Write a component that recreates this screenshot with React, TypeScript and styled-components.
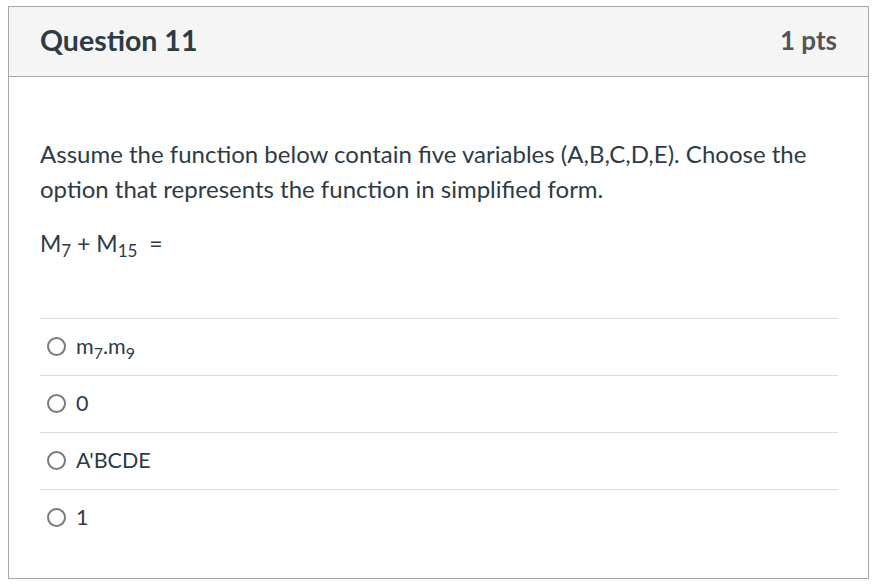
import React from 'react'
import styled, { createGlobalStyle } from 'styled-components'

const GlobalStyle = createGlobalStyle`
  html, body {
    margin: 0;
    padding: 0;
    background: #fff;
  }
  body {
    font-family: Lato, 'Liberation Sans', sans-serif;
    color: #2d3b45;
  }
`

const Page = styled.div`
  padding: 6px 11px 0 8px;
`

const Card = styled.div`
  border: 1px solid #a8a8a8;
  height: 571px;
  background: #fff;
`

const Header = styled.div`
  display: flex;
  justify-content: space-between;
  align-items: center;
  box-sizing: border-box;
  height: 70px;
  padding: 0 31px 4px;
  background: #f5f5f5;
  border-bottom: 1px solid #a8a8a8;
`

const Title = styled.h2`
  margin: 0;
  font-size: 28.5px;
  font-weight: 700;
  color: #2d3b45;
`

const Points = styled.span`
  font-size: 26px;
  font-weight: 700;
  color: #555;
`

const Body = styled.div`
  padding: 59px 30px 0 31px;
`

const Text = styled.p<{ $size?: number }>`
  margin: 0 0 20px;
  font-size: ${({ $size }) => $size ?? 24}px;
  line-height: 35px;
`

const Sub = styled.sub<{ $size?: number }>`
  font-size: ${({ $size }) => $size ?? 17}px;
  vertical-align: -5px;
  line-height: 0;
`

const Answers = styled.ul`
  list-style: none;
  margin: 57px 0 0;
  padding: 0;
`

const Answer = styled.li`
  display: flex;
  align-items: center;
  gap: 10px;
  box-sizing: border-box;
  height: 57px;
  padding-bottom: 2px;
  border-top: 1px solid #dcdcdc;
  font-size: 21.5px;
`

const Radio = styled.span`
  box-sizing: border-box;
  flex: none;
  width: 19px;
  height: 19px;
  margin-left: 7px;
  border: 2px solid #7a7a7a;
  border-radius: 50%;
`

const options: React.ReactNode[] = [
  <>
    m<Sub $size={16}>7</Sub>.m<Sub $size={16}>9</Sub>
  </>,
  '0',
  "A'BCDE",
  '1',
]

export default function App() {
  return (
    <>
      <GlobalStyle />
      <Page>
        <Card>
          <Header>
            <Title>Question 11</Title>
            <Points>1 pts</Points>
          </Header>
          <Body>
            <Text>
              Assume the function below contain five variables (A,B,C,D,E). Choose the
              option that represents the function in simplified form.
            </Text>
            <Text $size={23}>
              M<Sub>7</Sub> + M<Sub>15</Sub>&nbsp; =
            </Text>
            <Answers>
              {options.map((opt, i) => (
                <Answer key={i}>
                  <Radio />
                  <span>{opt}</span>
                </Answer>
              ))}
            </Answers>
          </Body>
        </Card>
      </Page>
    </>
  )
}
